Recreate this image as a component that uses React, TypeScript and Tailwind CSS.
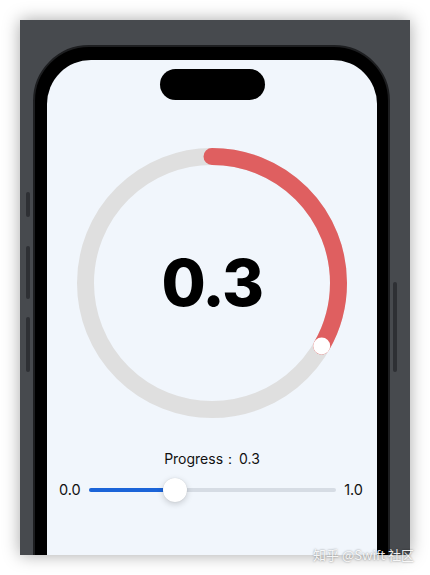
const progress = 0.333;

const RADIUS = 126.5;
const STROKE = 17;
const SIZE = 270;
const CIRC = 2 * Math.PI * RADIUS;

function ProgressRing({ value }: { value: number }) {
  const angle = value * 2 * Math.PI;
  const knobX = SIZE / 2 + RADIUS * Math.sin(angle);
  const knobY = SIZE / 2 - RADIUS * Math.cos(angle);

  return (
    <div className="relative w-[270px] h-[270px] flex items-center justify-center">
      <svg width={SIZE} height={SIZE} className="absolute inset-0">
        <circle cx={SIZE / 2} cy={SIZE / 2} r={RADIUS} fill="none" stroke="#dfdfdf" strokeWidth={STROKE} />
        <circle
          cx={SIZE / 2}
          cy={SIZE / 2}
          r={RADIUS}
          fill="none"
          stroke="#df5f60"
          strokeWidth={STROKE}
          strokeLinecap="round"
          strokeDasharray={`${CIRC * value} ${CIRC}`}
          transform={`rotate(-90 ${SIZE / 2} ${SIZE / 2})`}
        />
        <circle cx={knobX} cy={knobY} r={8.5} fill="#ffffff" />
      </svg>
      <span className="relative text-[64px] leading-none font-extrabold text-black tracking-[-1.5px] font-['Inter',sans-serif]">
        {value.toFixed(1)}
      </span>
    </div>
  );
}

function ValueSlider({ value }: { value: number }) {
  return (
    <div className="flex items-center gap-[8px] pl-[12px] pr-[14px] text-[14.5px] text-[#111] font-['Inter',sans-serif]">
      <span>0.0</span>
      <div className="relative flex-1 h-[4px] rounded-full bg-[#d6dce4]">
        <div className="absolute left-0 top-0 h-full rounded-full bg-[#1b64d8]" style={{ width: `calc(12px + ${value} * (100% - 24px))` }} />
        <div
          className="absolute top-1/2 w-[24px] h-[24px] -translate-y-1/2 rounded-full bg-white shadow-[0_2px_6px_rgba(0,0,0,0.18),0_0_1px_rgba(0,0,0,0.15)]"
          style={{ left: `calc(${value} * (100% - 24px))` }}
        />
      </div>
      <span>1.0</span>
    </div>
  );
}

export default function App() {
  return (
    <div className="relative w-[430px] h-[575px] overflow-hidden bg-white pt-[20px] pl-[20px]">
      <div className="relative w-[390px] h-[535px] overflow-hidden bg-[#474a4e] shadow-[0_0_16px_rgba(0,0,0,0.35)]">
        {/* side buttons */}
        <div className="absolute left-[6px] top-[172px] w-[4px] h-[25px] rounded-full bg-[#2e3034]" />
        <div className="absolute left-[6px] top-[226px] w-[4px] h-[53px] rounded-full bg-[#2e3034]" />
        <div className="absolute left-[6px] top-[297px] w-[4px] h-[55px] rounded-full bg-[#2e3034]" />
        <div className="absolute left-[373px] top-[262px] w-[4px] h-[90px] rounded-full bg-[#2e3034]" />

        {/* phone body */}
        <div className="ml-[13px] mt-[25px] w-[357px] h-[600px] rounded-[56px] bg-black border-[2px] border-[#1d1e20] pt-[13px] pl-[12px] pr-[11px]">
          <div className="w-[330px] h-[580px] rounded-[44px] bg-[#f1f6fc] flex flex-col items-center">
            <div className="mt-[9px] w-[105px] h-[31px] rounded-full bg-black" />
            <div className="mt-[48px]">
              <ProgressRing value={progress} />
            </div>
            <p className="mt-[30px] text-[14px] text-[#111] font-['Inter',sans-serif]">
              Progress：<span className="ml-[2px]">{progress.toFixed(1)}</span>
            </p>
            <div className="mt-[10px] w-full">
              <ValueSlider value={progress} />
            </div>
          </div>
        </div>
      </div>

      <span className="absolute left-[313px] top-[545px] text-[13px] text-white/90 font-['Noto_Sans_CJK_SC',sans-serif] [text-shadow:0_0_2px_rgba(0,0,0,0.5)]">
        知乎 @Swift 社区
      </span>
    </div>
  );
}
